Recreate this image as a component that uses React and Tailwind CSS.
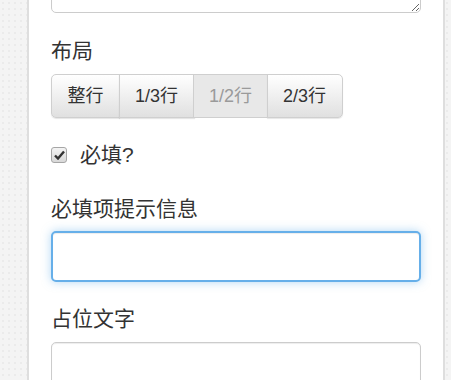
import React, { useState } from "react";

const layouts = [
  { label: "整行", width: "w-[69px]" },
  { label: "1/3行", width: "w-[76px]" },
  { label: "1/2行", width: "w-[75px]" },
  { label: "2/3行", width: "w-[76px]" },
];

const App = () => {
  const [layout, setLayout] = useState("1/2行");
  const [required, setRequired] = useState(true);

  return (
    <div
      className="h-[380px] overflow-hidden bg-[#f4f4f4] bg-[radial-gradient(#ebebeb_1px,transparent_1px)] bg-[length:6px_6px]"
      style={{ fontFamily: '"Liberation Sans", "Noto Sans CJK SC", sans-serif' }}
    >
      <div className="ml-[27px] w-[418px] h-full flex flex-col bg-white border-x-2 border-[#dedede] pl-[22px] pr-[22px] text-[#333]">
        <textarea className="block w-full h-[60px] shrink-0 -mt-[47px] bg-white border-[1.5px] border-[#cccccc] rounded-[5px] shadow-[inset_0_1px_1px_rgba(0,0,0,0.075)]" />

        <div className="mt-[24px] text-[21px] leading-[28px]">布局</div>
        <div className="mt-[9px] flex">
          {layouts.map((item, i) => {
            const active = layout === item.label;
            return (
              <button
                key={item.label}
                onClick={() => setLayout(item.label)}
                className={`h-[44px] text-[18px] border-[1.5px] border-[#cfcfcf] ${item.width} ${
                  i === 0 ? "rounded-l-[5px]" : "-ml-[1.5px]"
                } ${i === layouts.length - 1 ? "rounded-r-[5px]" : ""} ${
                  active
                    ? "bg-[#e8e8e8] text-[#9a9a9a]"
                    : "bg-[linear-gradient(to_bottom,#ffffff,#e0e0e0)] text-[#333] shadow-[0_1px_1px_rgba(0,0,0,0.1)]"
                }`}
              >
                {item.label}
              </button>
            );
          })}
        </div>

        <label className="mt-[29px] flex items-center h-[16px]">
          <span
            onClick={() => setRequired(!required)}
            className="w-[16px] h-[16px] rounded-[3px] border border-[#a6a6a6] bg-[linear-gradient(to_bottom,#f4f4f4,#d8d8d8)] flex items-center justify-center"
          >
            {required && (
              <svg width="11" height="10" viewBox="0 0 11 10">
                <path d="M1 5.5 L4 8.5 L10 1.5" fill="none" stroke="#333" strokeWidth="2.4" />
              </svg>
            )}
          </span>
          <span className="ml-[13px] text-[21px] leading-[28px]">必填?</span>
        </label>

        <div className="mt-[32px] text-[21px] leading-[28px]">必填项提示信息</div>
        <input className="mt-[8px] block w-full h-[51px] shrink-0 bg-white border-2 border-[#66afe9] rounded-[5px] outline-none shadow-[inset_0_1px_1px_rgba(0,0,0,0.075),0_0_10px_rgba(102,175,233,0.5)]" />

        <div className="mt-[23px] text-[21px] leading-[28px]">占位文字</div>
        <input className="mt-[9px] block w-full h-[51px] shrink-0 bg-white border-[1.5px] border-[#cccccc] rounded-[5px] shadow-[inset_0_1px_1px_rgba(0,0,0,0.075)]" />
      </div>
    </div>
  );
};

export default App;
